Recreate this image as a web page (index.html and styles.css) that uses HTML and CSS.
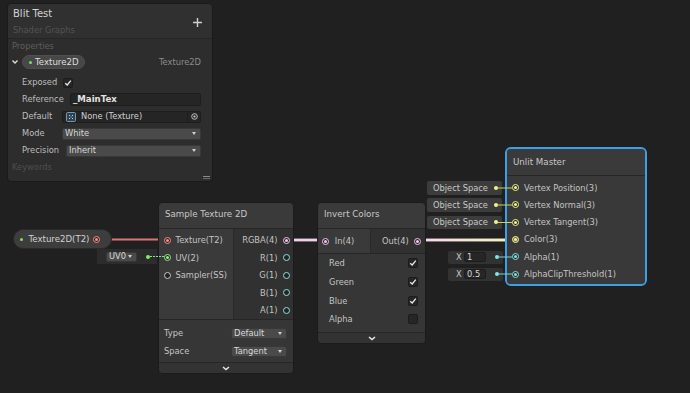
FILE: index.html
```html
<!DOCTYPE html>
<html lang="en">
<head>
<meta charset="utf-8">
<title>Blit Test</title>
<link rel="stylesheet" href="styles.css">
</head>
<body>
<div class="canvas">
  <svg class="edges" width="690" height="393" viewBox="0 0 690 393">
    <defs>
      <linearGradient id="gout" gradientUnits="userSpaceOnUse" x1="417" y1="0" x2="516" y2="0">
        <stop offset="0" stop-color="#e9b3e2"/>
        <stop offset="1" stop-color="#e3e88a"/>
      </linearGradient>
    </defs>
    <line x1="97" y1="239.5" x2="167" y2="239.5" stroke="#de7474" stroke-width="2"/>
    <line x1="286" y1="240" x2="325" y2="240" stroke="#dba7d5" stroke-width="3"/>
    <line x1="286" y1="240" x2="325" y2="240" stroke="#ffffff" stroke-width="1"/>
    <rect x="417" y="238.5" width="99" height="3" fill="url(#gout)"/>
    <line x1="417" y1="240" x2="516" y2="240" stroke="#ffffff" stroke-width="1"/>
  </svg>

  <div class="blackboard">
    <div class="bb-header">
      <div class="bb-title">Blit Test</div>
      <div class="bb-sub">Shader Graphs</div>
      <svg class="bb-add" width="9" height="9" viewBox="0 0 9 9"><path d="M4.5 0v9M0 4.5h9" stroke="#d0d0d0" stroke-width="1.4"/></svg>
    </div>
    <div class="bb-body">
      <div class="bb-section">Properties</div>
      <div class="bb-prop">
        <svg class="chev" width="6" height="4" viewBox="0 0 6 4"><path d="M0.5 0.5L3 3L5.5 0.5" fill="none" stroke="#e0e0e0" stroke-width="1.3"/></svg>
        <div class="pill"><span class="gdot"></span>Texture2D</div>
        <div class="bb-type">Texture2D</div>
      </div>
      <div class="bb-row first">
        <span class="lbl w41">Exposed</span>
        <span class="chk"><svg width="8" height="8" viewBox="0 0 8 8"><path d="M1.2 4.2L3.2 6L6.8 1.6" fill="none" stroke="#e8e8e8" stroke-width="1.3"/></svg></span>
      </div>
      <div class="bb-row">
        <span class="lbl w48">Reference</span>
        <span class="field bold">_MainTex</span>
      </div>
      <div class="bb-row">
        <span class="lbl w40">Default</span>
        <span class="field obj">
          <svg class="texicon" width="10" height="10" viewBox="0 0 10 10"><rect x="0.5" y="0.5" width="9" height="9" rx="1" fill="#30404e" stroke="#6f98bc"/><path d="M3 3h1v1H3zM6 3h1v1H6zM4.5 4.5h1v1h-1zM3 6h1v1H3zM6 6h1v1H6z" fill="#c9d6e2"/></svg>
          <span class="objtxt">None (Texture)</span>
          <span class="pick"><svg width="7" height="7" viewBox="0 0 7 7"><circle cx="3.5" cy="3.5" r="2.8" fill="none" stroke="#cfcfcf" stroke-width="0.9"/><circle cx="3.5" cy="3.5" r="1.1" fill="#cfcfcf"/></svg></span>
        </span>
      </div>
      <div class="bb-row">
        <span class="lbl w40">Mode</span>
        <span class="dd wide">White<i class="arr"></i></span>
      </div>
      <div class="bb-row">
        <span class="lbl w44">Precision</span>
        <span class="dd wide">Inherit<i class="arr"></i></span>
      </div>
      <div class="bb-section kw">Keywords</div>
    </div>
    <span class="grip"></span>
  </div>

  <div class="prop-node">
    <span class="gdot"></span>
    <span class="prop-name">Texture2D(T2)</span>
    <span class="port p-tex on"></span>
  </div>

  <div class="uvbox">
    <span class="dd uvdd">UV0<i class="arr"></i></span>
    <span class="sdot d-v2"></span>
  </div>

  <div class="node sample">
    <div class="node-title">Sample Texture 2D</div>
    <div class="ports">
      <div class="inputs">
        <div class="prow"><span class="port p-tex on"></span><span>Texture(T2)</span></div>
        <div class="prow"><span class="port p-v2 on"></span><span>UV(2)</span></div>
        <div class="prow"><span class="port p-ss"></span><span>Sampler(SS)</span></div>
      </div>
      <div class="outputs">
        <div class="prow out"><span>RGBA(4)</span><span class="port p-v4 on"></span></div>
        <div class="prow out"><span>R(1)</span><span class="port p-v1"></span></div>
        <div class="prow out"><span>G(1)</span><span class="port p-v1"></span></div>
        <div class="prow out"><span>B(1)</span><span class="port p-v1"></span></div>
        <div class="prow out"><span>A(1)</span><span class="port p-v1"></span></div>
      </div>
    </div>
    <div class="settings">
      <div class="srow"><span>Type</span><span class="dd sdd">Default<i class="arr"></i></span></div>
      <div class="srow"><span>Space</span><span class="dd sdd">Tangent<i class="arr"></i></span></div>
    </div>
    <div class="collapse"><svg width="8" height="5" viewBox="0 0 8 5"><path d="M1 1l3 2.6L7 1" fill="none" stroke="#e6e6e6" stroke-width="1.5"/></svg></div>
  </div>

  <div class="node invert">
    <div class="node-title">Invert Colors</div>
    <div class="ports inv-ports">
      <div class="inputs inv-in">
        <div class="prow tall"><span class="port p-v4 on"></span><span>In(4)</span></div>
      </div>
      <div class="outputs">
        <div class="prow out tall"><span>Out(4)</span><span class="port p-v4 on"></span></div>
      </div>
    </div>
    <div class="controls">
      <div class="crow"><span>Red</span><span class="chk"><svg width="8" height="8" viewBox="0 0 8 8"><path d="M1.2 4.2L3.2 6L6.8 1.6" fill="none" stroke="#e8e8e8" stroke-width="1.3"/></svg></span></div>
      <div class="crow"><span>Green</span><span class="chk"><svg width="8" height="8" viewBox="0 0 8 8"><path d="M1.2 4.2L3.2 6L6.8 1.6" fill="none" stroke="#e8e8e8" stroke-width="1.3"/></svg></span></div>
      <div class="crow"><span>Blue</span><span class="chk"><svg width="8" height="8" viewBox="0 0 8 8"><path d="M1.2 4.2L3.2 6L6.8 1.6" fill="none" stroke="#e8e8e8" stroke-width="1.3"/></svg></span></div>
      <div class="crow"><span>Alpha</span><span class="chk"></span></div>
    </div>
    <div class="collapse"><svg width="8" height="5" viewBox="0 0 8 5"><path d="M1 1l3 2.6L7 1" fill="none" stroke="#e6e6e6" stroke-width="1.5"/></svg></div>
  </div>

  <div class="inline os1">Object Space<span class="sdot d-v3"></span></div>
  <div class="inline os2">Object Space<span class="sdot d-v3"></span></div>
  <div class="inline os3">Object Space<span class="sdot d-v3"></span></div>
  <div class="xbox x1"><span class="xl">X</span><span class="xf">1</span><span class="sdot d-v1"></span></div>
  <div class="xbox x2"><span class="xl">X</span><span class="xf">0.5</span><span class="sdot d-v1"></span></div>

  <div class="node master">
    <div class="node-title">Unlit Master</div>
    <div class="mbody">
      <div class="prow mrow"><span class="port p-v3 on"></span><span>Vertex Position(3)</span></div>
      <div class="prow mrow"><span class="port p-v3 on"></span><span>Vertex Normal(3)</span></div>
      <div class="prow mrow"><span class="port p-v3 on"></span><span>Vertex Tangent(3)</span></div>
      <div class="prow mrow"><span class="port p-v3 on full"></span><span>Color(3)</span></div>
      <div class="prow mrow"><span class="port p-v1 on"></span><span>Alpha(1)</span></div>
      <div class="prow mrow"><span class="port p-v1 on"></span><span>AlphaClipThreshold(1)</span></div>
    </div>
  </div>

  <svg class="edges-top" width="690" height="393" viewBox="0 0 690 393">
    <line x1="150" y1="256.5" x2="164" y2="256.5" stroke="#8fe07f" stroke-width="1" stroke-dasharray="2 1"/>
    <line x1="498" y1="188" x2="512" y2="188" stroke="#cfcf6c" stroke-width="1"/>
    <line x1="498" y1="205" x2="512" y2="205" stroke="#cfcf6c" stroke-width="1"/>
    <line x1="498" y1="222.5" x2="512" y2="222.5" stroke="#cfcf6c" stroke-width="1"/>
    <line x1="498" y1="257" x2="512" y2="257" stroke="#78d2d6" stroke-width="1"/>
    <line x1="498" y1="274" x2="512" y2="274" stroke="#78d2d6" stroke-width="1"/>
  </svg>
</div>
</body>
</html>
```

FILE: styles.css
```css
* { box-sizing: border-box; margin: 0; padding: 0; }
html, body { width: 690px; height: 393px; overflow: hidden; }
body {
  background: #202020;
  font-family: "DejaVu Sans", Verdana, sans-serif;
  font-size: 8.3px;
  line-height: 1;
  color: #c4c4c4;
}
.canvas { position: relative; width: 690px; height: 393px; overflow: hidden; background: #202020; }
.edges { position: absolute; left: 0; top: 0; z-index: 0; }
.edges-top { position: absolute; left: 0; top: 0; z-index: 4; pointer-events: none; }

/* ---------- blackboard ---------- */
.blackboard {
  position: absolute; left: 7px; top: 3px; width: 206px; height: 179px; z-index: 2;
  display: flex; flex-direction: column;
  background: #2d2d2d; border: 1px solid #1a1a1a; border-radius: 4px;
}
.bb-header {
  position: relative; flex: none; height: 35px; padding: 3px 0 0 5px;
  background: #303030; border-bottom: 1px solid #252525; border-radius: 4px 4px 0 0;
}
.bb-title { font-size: 10px; line-height: 14px; color: #d4d4d4; }
.bb-sub { margin-top: 3.5px; font-size: 8.3px; line-height: 11px; color: #535353; }
.bb-add { position: absolute; right: 10px; top: 14px; }
.bb-body { display: flex; flex-direction: column; padding: 1px 11px 0 4px; }
.bb-section { line-height: 12px; color: #5e5e5e; }
.bb-section.kw { margin-top: 2px; color: #4d4d4d; }
.bb-prop { height: 16px; margin-top: 2px; display: flex; align-items: center; }
.chev { flex: none; margin-right: 4px; }
.pill {
  display: flex; align-items: center; height: 14.5px; padding: 0 0 0 6px; width: 63px;
  background: #474747; border: 1px solid #4f4f4f; border-radius: 8px;
  font-size: 8.6px; color: #dedede;
}
.gdot { flex: none; width: 3px; height: 3px; border-radius: 50%; background: #7ee25c; margin-right: 3px; }
.bb-type { margin-left: auto; color: #8c8c8c; font-size: 8.3px; }
.bb-row { height: 17px; display: flex; align-items: center; padding-left: 10px; }
.bb-row.first { margin-top: 4px; }
.lbl { flex: none; color: #bdbdbd; }
.w40 { width: 40px; } .w41 { width: 41px; } .w44 { width: 44px; } .w48 { width: 48px; }
.chk {
  flex: none; display: flex; align-items: center; justify-content: center;
  width: 10px; height: 10px; background: #262626; border: 1px solid #1c1c1c; border-radius: 2px;
}
.field {
  flex: 1; height: 13px; display: flex; align-items: center; padding-left: 2px;
  background: #252525; border: 1px solid #1d1d1d; border-radius: 2px; color: #d0d0d0;
}
.field.bold { font-weight: bold; font-size: 8.6px; color: #e2e2e2; }
.field.obj { height: 12px; }
.texicon { flex: none; margin: 0 5px 0 1px; }
.objtxt { flex: 1; }
.pick { flex: none; width: 13px; height: 100%; display: flex; align-items: center; justify-content: center; border-left: 1px solid #1d1d1d; }
.dd {
  position: relative; display: flex; align-items: center; padding-left: 2px;
  background: #4a4a4a; border: 1px solid #383838; border-radius: 2px; color: #d8d8d8;
}
.dd.wide { flex: 1; height: 12px; }
.arr {
  position: absolute; right: 4px; top: 50%; margin-top: -1.5px;
  border-left: 2.5px solid transparent; border-right: 2.5px solid transparent; border-top: 3px solid #d0d0d0;
}
.grip { position: absolute; right: 2px; bottom: 2px; width: 7px; height: 3px; border-top: 1px solid #8a8a8a; border-bottom: 1px solid #6a6a6a; }

/* ---------- property node & inline inputs ---------- */
.prop-node {
  position: absolute; left: 13px; top: 229px; width: 99px; height: 20px; z-index: 1;
  display: flex; align-items: center; padding-left: 6px;
  background: #3d3d3d; border: 1px solid #2a2a2a; border-radius: 10px;
  font-size: 8.6px; color: #d2d2d2;
}
.prop-node .gdot { margin-right: 5.5px; }
.prop-node .port { margin-left: auto; margin-right: 11px; }
.uvbox {
  position: absolute; left: 97px; top: 249px; width: 60px; height: 15px; z-index: 1;
  display: flex; align-items: center; padding-left: 9px; background: #2c2c2c;
}
.uvdd { width: 31px; height: 10px; }
.uvbox .sdot { margin-left: 8.5px; }
.sdot { flex: none; width: 4px; height: 4px; border-radius: 50%; }
.d-v2 { background: #8fe07f; box-shadow: 0 0 0 1px #1d3b19; }
.d-v3 { background: #f2f48c; }
.d-v1 { background: #84e4e7; }
.inline {
  position: absolute; left: 427px; width: 75px; height: 13.5px; z-index: 2;
  display: flex; align-items: center; justify-content: space-between; padding: 0 4px 0 6px;
  background: #3c3c3c; border-radius: 2px; color: #c8c8c8;
}
.os1 { top: 181px; } .os2 { top: 198px; } .os3 { top: 215.5px; }
.xbox {
  position: absolute; left: 448px; width: 55px; height: 13px; z-index: 2;
  display: flex; align-items: center; padding: 0 4px 0 8px; background: #323232; border-radius: 2px; color: #c8c8c8;
}
.x1 { top: 250.5px; } .x2 { top: 267.5px; }
.xl { width: 8px; }
.xf {
  width: 22px; height: 10px; display: flex; align-items: center; padding-left: 2px;
  background: #262626; border: 1px solid #1d1d1d; border-radius: 2px; color: #d6d6d6;
}
.xbox .sdot { margin-left: auto; }

/* ---------- nodes ---------- */
.node {
  position: absolute; z-index: 1; display: flex; flex-direction: column;
  background: #383838; border: 1px solid #1b1b1b; border-radius: 5px; overflow: hidden;
}
.node-title {
  flex: none; display: flex; align-items: center; height: 26px; padding: 0 0 3px 6px;
  font-size: 8.7px; color: #c8c8c8; background: #3a3a3a; border-bottom: 1px solid #262626;
}
.sample { left: 158px; top: 202px; width: 136px; height: 172px; }
.ports { flex: none; display: flex; height: 91px; border-bottom: 1px solid #262626; }
.inputs { width: 75px; padding-top: 2.5px; background: #3a3a3a; border-right: 1px solid #2a2a2a; }
.outputs { flex: 1; padding-top: 2.5px; background: #313131; }
.prow { height: 17.5px; display: flex; align-items: center; gap: 5px; padding-left: 4.5px; }
.prow.out { justify-content: flex-end; padding: 0 3.5px 0 0; }
.port {
  flex: none; position: relative; width: 7px; height: 7px; border-radius: 50%;
  border: 1px solid currentColor; background: #232323;
}
.port.on::after {
  content: ""; position: absolute; left: 1px; top: 1px; width: 3px; height: 3px;
  border-radius: 50%; background: currentColor;
}
.port.full { background: #6f7042; }
.p-tex { color: #ff8b8b; }
.p-v2 { color: #95ee88; }
.p-ss { color: #c8c8c8; }
.p-v4 { color: #f5c2ee; }
.p-v1 { color: #84e4e7; }
.p-v3 { color: #f4f792; }
.settings { flex: none; height: 43px; padding: 4px 6px 0 5px; background: #363636; border-bottom: 1px solid #262626; }
.srow { height: 18px; display: flex; align-items: center; justify-content: space-between; }
.sdd { width: 56px; height: 11px; }
.collapse { flex: 1; display: flex; align-items: center; justify-content: center; background: #333333; }

.invert { left: 317px; top: 202px; width: 109px; height: 142px; }
.inv-ports { height: 25px; }
.inv-in { width: 53px; padding-top: 0; }
.inv-ports .outputs { padding-top: 0; }
.prow.tall { height: 24px; padding-left: 3.8px; gap: 5.9px; }
.prow.out.tall { padding: 0 4.2px 0 0; gap: 5px; }
.controls { flex: none; height: 79px; padding: 0 7px 3px 11px; background: #363636; border-bottom: 1px solid #262626; }
.crow { height: 18.7px; display: flex; align-items: center; justify-content: space-between; color: #c4c4c4; }

.master {
  left: 505px; top: 147px; width: 142px; height: 139px;
  border: 2px solid #3d9fe6; border-radius: 6px;
}
.master .node-title { height: 27px; padding: 1px 0 0 6px; }
.mbody { flex: 1; padding-top: 3px; background: #393939; }
.prow.mrow { height: 17.3px; padding-left: 5px; }
```
